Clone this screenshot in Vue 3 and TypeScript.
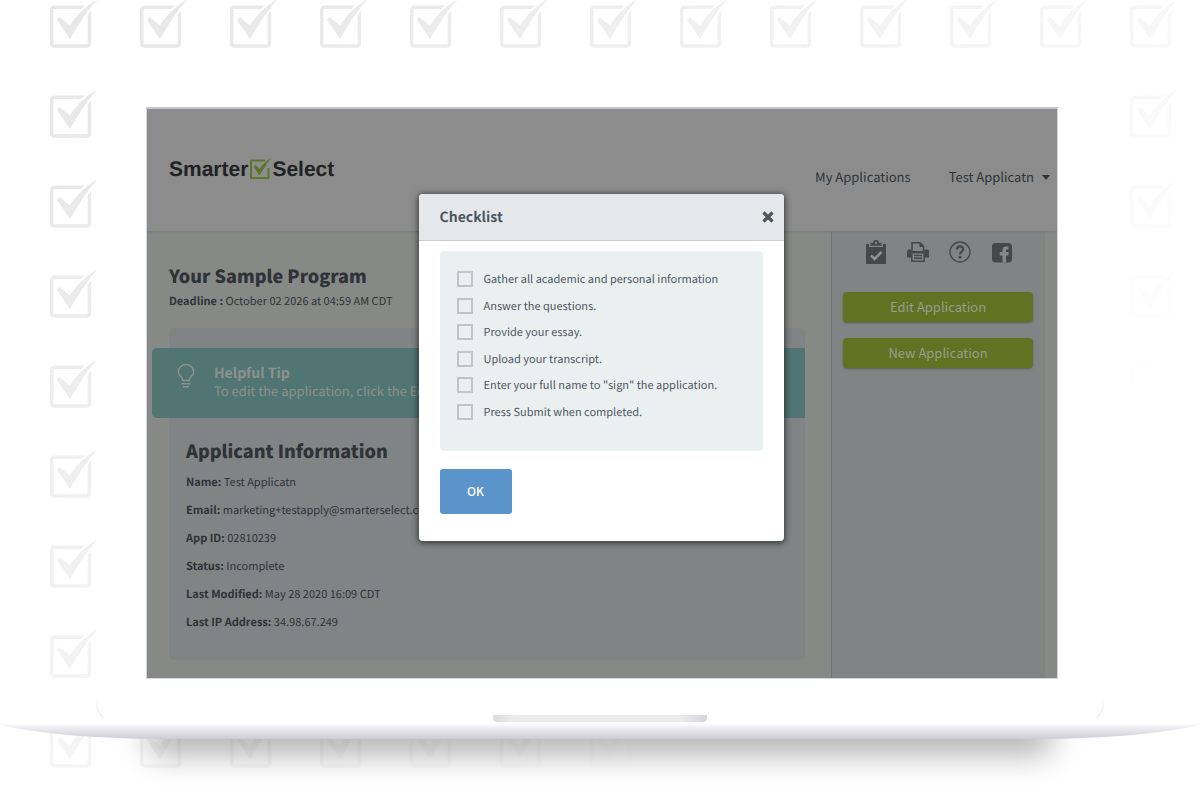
<script setup lang="ts">
import { ref } from 'vue'

interface Task { label: string; done: boolean }
interface Field { name: string; value: string }

const open = ref(true)

const tasks = ref<Task[]>([
  { label: 'Gather all academic and personal information', done: false },
  { label: 'Answer the questions.', done: false },
  { label: 'Provide your essay.', done: false },
  { label: 'Upload your transcript.', done: false },
  { label: 'Enter your full name to "sign" the application.', done: false },
  { label: 'Press Submit when completed.', done: false },
])

const fields: Field[] = [
  { name: 'Name:', value: 'Test Applicatn' },
  { name: 'Email:', value: 'marketing+testapply@smarterselect.com' },
  { name: 'App ID:', value: '02810239' },
  { name: 'Status:', value: 'Incomplete' },
  { name: 'Last Modified:', value: 'May 28 2020 16:09 CDT' },
  { name: 'Last IP Address:', value: '34.98.67.249' },
]
</script>

<template>
  <div class="stage">
    <svg class="backdrop" aria-hidden="true">
      <defs>
        <pattern id="ticks" x="40" width="90" height="90" patternUnits="userSpaceOnUse">
          <rect x="11.700" y="7.200" width="37.700" height="38.900" rx="2.500" fill="none" stroke="#e8e8e8" stroke-width="3.500" />
          <path d="M17 20 L19.500 17 L30 25.500 C36 16 45 6 58 -1 C48 9 39 24 30 39 Z" fill="#e8e8e8" stroke="#fff" stroke-width="4" paint-order="stroke" />
        </pattern>
      </defs>
      <rect x="40" width="100%" height="100%" fill="url(#ticks)" />
    </svg>

    <div class="laptop">
      <div class="lid">
        <div class="screen">
          <header class="top">
            <a class="logo" href="#">
              <span>Smarter</span>
              <svg width="24" height="24" viewBox="0 0 24 24" aria-hidden="true">
                <path d="M17 3.500 H3 V21 H20.500 V11" fill="none" stroke="#5d7527" stroke-width="2" stroke-linejoin="round" />
                <path d="M5.500 9.500 L7.500 8 L11.500 12 C14.500 8 18 4 23.500 0.500 C19 6 15.500 12 11.500 18.500 Z" fill="#5d7527" />
              </svg>
              <span>Select</span>
            </a>
            <nav class="nav">
              <a href="#">My Applications</a>
              <button type="button" class="user">Test Applicatn <i class="caret"></i></button>
            </nav>
          </header>

          <div class="body">
            <main class="main">
              <h1>Your Sample Program</h1>
              <p class="deadline"><b>Deadline :</b> October 02 2026 at 04:59 AM CDT</p>
              <section class="card">
                <div class="tip">
                  <svg width="18" height="26" viewBox="0 0 18 26" fill="none" stroke="#8d918f" stroke-width="1.400" aria-hidden="true">
                    <path d="M5.500 16.500 V15 C5.500 13 1.300 12 1.300 8 A7.700 7.500 0 0 1 16.700 8 C16.700 12 12.500 13 12.500 15 V16.500 Z" />
                    <path d="M4.500 19.700 H13.500 M6 22.800 H12" />
                  </svg>
                  <div>
                    <strong>Helpful Tip</strong>
                    <p>To edit the application, click the Edit</p>
                  </div>
                </div>
                <div class="info">
                  <h2>Applicant Information</h2>
                  <p v-for="f in fields" :key="f.name"><b>{{ f.name }}</b> {{ f.value }}</p>
                </div>
              </section>
            </main>

            <aside class="side">
              <div class="tools">
                <button type="button" aria-label="Checklist" @click="open = true">
                  <svg width="22" height="24" viewBox="0 0 22 24" aria-hidden="true">
                    <path d="M1 4 H4 V7 H18 V4 H21 V24 H1 Z" fill="#464848" />
                    <path d="M5.500 3 H8 A3 3 0 0 1 14 3 H16.500 V5.800 H5.500 Z" fill="#464848" />
                    <circle cx="11" cy="3" r="1.200" fill="#808484" />
                    <path d="M6 15.500 L9.700 19 L16.500 12" fill="none" stroke="#8d9191" stroke-width="2.600" />
                  </svg>
                </button>
                <button type="button" aria-label="Print">
                  <svg width="22" height="24" viewBox="1 0 22 24" aria-hidden="true">
                    <path d="M6 11 V2.700 H14 L17.500 6.500 V11" fill="none" stroke="#464848" stroke-width="1.600" />
                    <path d="M13.500 2.500 V7 H18 Z" fill="#464848" />
                    <path d="M1 17.500 V11 Q1 9.500 3 9.500 H5 V11 H18.500 V9.500 H21 Q23 9.500 23 11 V17.500 H19 V13.500 H5 V17.500 Z" fill="#464848" />
                    <path d="M5.800 13.500 V21.200 H18.200 V13.500 M8 15.500 H16 M8 18.300 H16" fill="none" stroke="#464848" stroke-width="1.500" />
                  </svg>
                </button>
                <button type="button" aria-label="Help">
                  <svg width="22" height="24" viewBox="0 0 22 24" aria-hidden="true">
                    <circle cx="11" cy="12" r="10" fill="none" stroke="#464848" stroke-width="1.400" />
                    <path d="M8 9.500 C8 5.300 14.200 5.500 14.200 9 C14.200 11.500 11 11.500 11 14.500" fill="none" stroke="#464848" stroke-width="2.200" />
                    <circle cx="11" cy="17.300" r="1.500" fill="#464848" />
                  </svg>
                </button>
                <a href="#" aria-label="Facebook">
                  <svg width="22" height="24" viewBox="0 0 22 24" aria-hidden="true">
                    <rect x="1" y="3" width="20" height="19.500" rx="3.500" fill="#464848" />
                    <path d="M11.500 22.500 V15.500 H8.800 V12 H11.500 V10.200 C11.500 7.300 13.200 6.300 17.500 6.700 V9.600 C15.300 9.400 15 9.800 15 10.700 V12 H17.700 L17.300 15.500 H15 V22.500 Z" fill="#858989" />
                  </svg>
                </a>
              </div>
              <button type="button" class="green">Edit Application</button>
              <button type="button" class="green">New Application</button>
            </aside>
          </div>

          <div v-if="open" class="modal" role="dialog" aria-labelledby="checklist-title">
            <div class="modal-head">
              <h3 id="checklist-title">Checklist</h3>
              <button type="button" class="close" aria-label="Close" @click="open = false">
                <svg width="12" height="12" viewBox="0 0 12 12" aria-hidden="true">
                  <path d="M1.500 1.500 L10.500 10.500 M10.500 1.500 L1.500 10.500" stroke="#4b5661" stroke-width="3.200" />
                </svg>
              </button>
            </div>
            <div class="modal-body">
              <ul class="list">
                <li v-for="(t, i) in tasks" :key="i">
                  <label><input v-model="t.done" type="checkbox" /><span>{{ t.label }}</span></label>
                </li>
              </ul>
              <button type="button" class="ok" @click="open = false">OK</button>
            </div>
          </div>
        </div>
      </div>

      <div class="base">
        <svg viewBox="0 0 1200 22" preserveAspectRatio="none" aria-hidden="true">
          <defs>
            <linearGradient id="edge" x1="0" y1="5" x2="0" y2="21" gradientUnits="userSpaceOnUse">
              <stop offset="0" stop-color="#ffffff" />
              <stop offset="0.400" stop-color="#e9e8ee" />
              <stop offset="1" stop-color="#cdcbd6" />
            </linearGradient>
          </defs>
          <rect width="1200" height="7" fill="#fff" />
          <path d="M0 7 C40 16 100 21 170 21 H1030 C1100 21 1160 16 1200 7 V5 H0 Z" fill="url(#edge)" />
        </svg>
        <div class="notch"></div>
      </div>
    </div>
  </div>
</template>

<style>
body {
  margin: 0;
  background: #fff;
}
</style>

<style scoped>
.stage {
  position: relative;
  box-sizing: border-box;
  min-height: 100vh;
  padding: 80px 0 59px;
  overflow: hidden;
  font-family: "Noto Sans CJK SC", "Noto Sans", sans-serif;
  text-rendering: geometricPrecision;
  color: #2e3338;
}
.backdrop {
  position: absolute;
  inset: 0;
  width: 100%;
  height: 768px;
  mask-image: linear-gradient(142deg, #000 11%, transparent 76%);
}
h1, h2, h3, p, ul {
  margin: 0;
  padding: 0;
}
h1, h2 {
  font-size: 18px;
  font-weight: 900;
  line-height: 28px;
}
button {
  border: 0;
  padding: 0;
  background: none;
  font: inherit;
  color: inherit;
  cursor: pointer;
}
a {
  color: inherit;
  text-decoration: none;
}
svg {
  display: block;
}
.laptop {
  position: relative;
}
.lid {
  position: relative;
  z-index: 1;
  margin: 0 8% -6px;
  padding: 27px 46px 45px 50px;
  background: #fff;
  border-radius: 0 0 24px 24px;
  box-shadow: 0 1px 1px #f0f0f0, 0 1px 0 #aaa;
}
.screen {
  position: relative;
  border: 1px solid #d6d5df;
  border-top: 2px solid #c6c6ce;
  background: #878986;
  overflow: hidden;
}
.top {
  display: flex;
  align-items: center;
  justify-content: space-between;
  height: 122px;
  padding: 0 7px 0 22px;
  background: #8c8c8c;
  box-shadow: 0 1px 2px #747878;
  position: relative;
}
.logo {
  display: flex;
  align-items: center;
  padding-bottom: 1px;
  font: bold 21px/24px "Liberation Sans", sans-serif;
  color: #202224;
}
.logo svg {
  margin-bottom: 2px;
}
.nav {
  display: flex;
  align-items: center;
  gap: 38px;
  padding-top: 14px;
  font-size: 13px;
  line-height: 20px;
}
.user {
  display: flex;
  align-items: center;
  gap: 8px;
}
.caret {
  border: 4px solid transparent;
  border-top: 5px solid #2e3338;
  border-bottom: 0;
}
.body {
  display: flex;
  padding-right: 12px;
}
.main {
  flex: 1;
  min-width: 0;
  padding: 31px 26px 18px 22px;
}
.deadline {
  font-size: 11px;
  line-height: 16px;
  padding: 3px 0 19px;
}
.card {
  padding: 20px 0 24px;
  background: #808484;
  border-radius: 5px;
}
.tip {
  display: flex;
  gap: 19px;
  height: 54px;
  margin-left: -17px;
  padding: 16px 0 0 25px;
  background: #507572;
  border-radius: 5px 0 0 5px;
  color: #8d918f;
  font-size: 13px;
  line-height: 18px;
  white-space: nowrap;
  overflow: hidden;
}
.tip strong {
  font-size: 14px;
}
.info {
  padding: 19px 17px 0;
}
h2 {
  padding-bottom: 3px;
}
.info p {
  font-size: 11px;
  line-height: 28px;
}
.side {
  width: 190px;
  padding: 9px 12px 0 11px;
  border-left: 1px solid #6f747a;
  background: #808484;
}
.tools {
  display: flex;
  gap: 20px;
  padding: 0 0 28px 22px;
}
.tools > * {
  width: 22px;
  height: 24px;
}
.green {
  display: block;
  width: 100%;
  height: 30px;
  margin-bottom: 16px;
  background: #5f7323;
  border-radius: 4px;
  box-shadow: 0 1px 2px #5c6258;
  color: #989e8c;
  font-size: 13px;
  line-height: 30px;
}
.modal {
  position: absolute;
  top: 85px;
  left: 0;
  right: 2px;
  width: 365px;
  margin: 0 auto;
  background: #fff;
  border-radius: 4px;
  box-shadow: 0 1px 6px 1px rgba(0, 0, 0, 0.6);
  overflow: hidden;
}
.modal-head {
  display: flex;
  align-items: center;
  justify-content: space-between;
  height: 46px;
  padding: 0 10px 0 21px;
  background: #e4e8eb;
  border-bottom: 1px solid #cacbd0;
  color: #4b5661;
}
h3 {
  font-size: 14px;
  line-height: 20px;
}
.modal-body {
  padding: 10px 21px 27px;
}
.list {
  display: flex;
  flex-direction: column;
  justify-content: space-between;
  height: 149px;
  padding: 20px 17px 31px;
  background: #eaf0f0;
  border-radius: 4px;
  list-style: none;
  color: #4e5763;
}
.list label {
  display: flex;
  align-items: center;
  gap: 11px;
  font-size: 11px;
  line-height: 16px;
}
.list input {
  appearance: none;
  flex: none;
  width: 16px;
  height: 16px;
  margin: 0;
  border: 2px solid #bec5ca;
}
.list input:checked {
  background: #5b93cb;
}
.ok {
  display: block;
  width: 72px;
  height: 45px;
  margin-top: 18px;
  padding-bottom: 2px;
  background: #5b93cb;
  border-radius: 3px;
  color: #fff;
  font-size: 12px;
  font-weight: 500;
}
.base {
  position: relative;
}
.base::before {
  content: "";
  position: absolute;
  inset: 0 13% 4px;
  border-radius: 18px;
  box-shadow: 0 8px 32px 10px rgba(0, 0, 0, 0.32);
}
.base svg {
  position: relative;
  z-index: 2;
  width: 100%;
  height: 22px;
}
.notch {
  position: absolute;
  z-index: 3;
  top: -3px;
  left: 0;
  right: 0;
  width: 214px;
  height: 7px;
  margin: 0 auto;
  border-radius: 0 0 4px 4px;
  background: linear-gradient(90deg, #dcdcde, #ebebed 10%, #ebebed 88%, #d4d3dc);
}
</style>
